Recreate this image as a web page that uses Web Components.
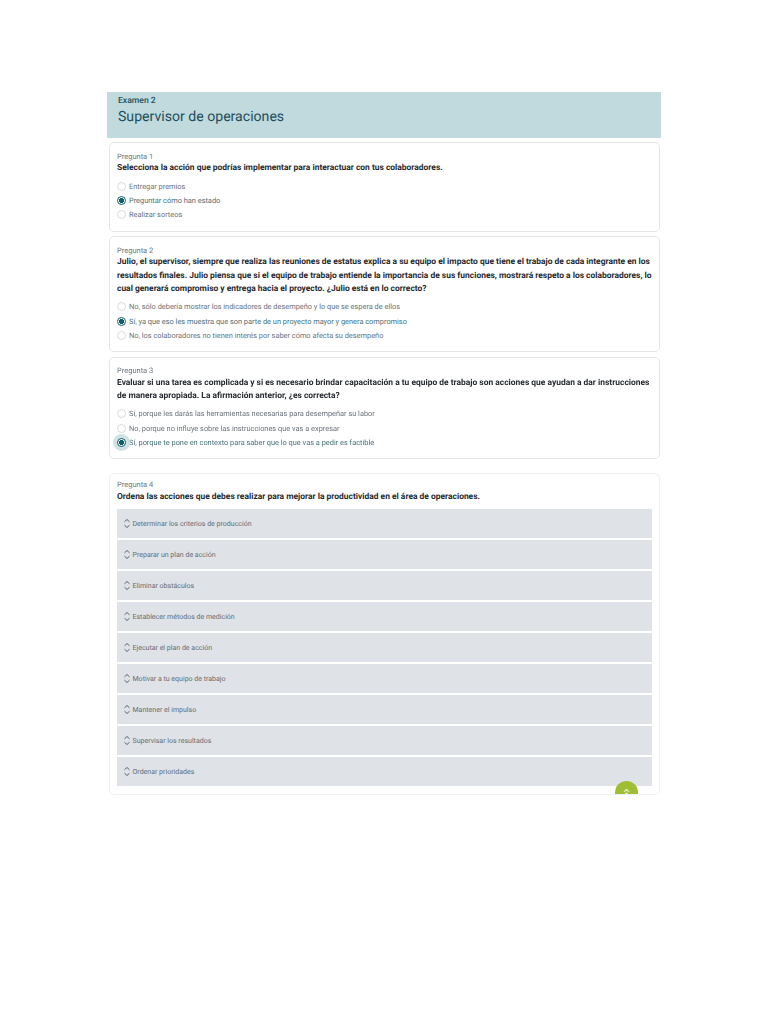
<!DOCTYPE html>
<html lang="es">
<head>
<meta charset="utf-8">
<title>Examen 2</title>
<style>
  html, body { margin: 0; background: #fff; }
  body { font-family: Roboto, "Liberation Sans", sans-serif; color: #263238; text-rendering: geometricPrecision; }
  #page { width: 554px; margin-left: 107px; padding-top: 92px; filter: blur(0.5px); }
</style>
</head>
<body>
<template id="exam-header-tpl">
  <style>
    :host { display: block; height: 46px; box-sizing: border-box; padding: 3px 11px; background: #c0dade; color: #1f4f5a; }
    .sub { font-size: 8.6px; line-height: 12px; font-weight: 500; }
    .title { font-size: 14.1px; line-height: 18px; margin-top: 1px; }
  </style>
  <div class="sub"><slot name="sub"></slot></div>
  <div class="title"><slot name="title"></slot></div>
</template>

<template id="q-card-tpl">
  <style>
    :host { display: block; position: relative; overflow: hidden; box-sizing: border-box; margin: 4px 1px 0 2px; padding: 7.5px 7px 6px; background: #fff; border: 1px solid var(--card-border, #e3e5e7); border-radius: 5px; }
    .label { font-size: 7.5px; line-height: 11px; color: #6f787f; }
    .text { margin-top: 0.7px; font-size: 8.45px; line-height: 13.4px; font-weight: 700; color: #272b30; }
    .body { margin-top: var(--body-gap, 3.3px); display: flex; flex-direction: column; }
  </style>
  <div class="label"><slot name="label"></slot></div>
  <div class="text"><slot name="text"></slot></div>
  <div class="body"><slot></slot></div>
</template>

<template id="radio-option-tpl">
  <style>
    :host { display: flex; align-items: center; gap: 3.5px; height: 14.3px; font-size: 7.4px; color: #6a737b; }
    :host([checked]) { color: #47727a; }
    .wrap { position: relative; z-index: 0; display: flex; margin-left: -0.5px; }
    .dot { position: relative; box-sizing: border-box; flex: none; width: 9px; height: 9px; border-radius: 50%; background: #fff; border: 1px solid #d6d9dc; }
    :host([checked]) .dot { border-color: #0f5f6b; background: radial-gradient(circle, #0f5f6b 0 2.3px, #fff 2.8px); }
    :host([focused]) .wrap::before { content: ""; position: absolute; inset: -4px; border-radius: 50%; background: #cfe3e6; z-index: -1; }
  </style>
  <span class="wrap"><span class="dot"></span></span>
  <span><slot></slot></span>
</template>

<template id="sort-item-tpl">
  <style>
    :host { display: flex; align-items: center; gap: 1.5px; height: 29px; margin-bottom: 2px; padding-left: 6px; background: #dfe2e6; font-size: 7.03px; color: #666e76; }
    svg { display: block; flex: none; }
  </style>
  <svg width="8" height="11" viewBox="0 0 8 11" fill="none" stroke="#59626a" stroke-width="1"><path d="M1.5 3.8 4 1.5l2.5 2.3M1.5 7.2 4 9.5l2.5-2.3"/></svg>
  <span><slot></slot></span>
</template>

<template id="scroll-fab-tpl">
  <style>
    :host { display: block; position: absolute; right: 21.5px; bottom: -10px; width: 23px; height: 23px; border-radius: 50%; background: #9fbe34; }
    svg { display: block; margin: 7px auto 0; }
  </style>
  <svg width="7" height="9" viewBox="0 0 7 9" fill="none" stroke="#e6efc4" stroke-width="1.2"><path d="M1 3.8 3.5 1.3 6 3.8M1 7.6l2.5-2.5L6 7.6"/></svg>
</template>

<div id="page">
  <exam-header>
    <span slot="sub">Examen 2</span>
    <span slot="title">Supervisor de operaciones</span>
  </exam-header>

  <q-card style="height:90px">
    <span slot="label">Pregunta 1</span>
    <span slot="text">Selecciona la acción que podrías implementar para interactuar con tus colaboradores.</span>
    <radio-option>Entregar premios</radio-option>
    <radio-option checked>Preguntar cómo han estado</radio-option>
    <radio-option>Realizar sorteos</radio-option>
  </q-card>

  <q-card style="height:116px">
    <span slot="label">Pregunta 2</span>
    <span slot="text">Julio, el supervisor, siempre que realiza las reuniones de estatus explica a su equipo el impacto que tiene el trabajo de cada integrante en los resultados finales. Julio piensa que si el equipo de trabajo entiende la importancia de sus funciones, mostrará respeto a los colaboradores, lo cual generará compromiso y entrega hacia el proyecto. ¿Julio está en lo correcto?</span>
    <radio-option>No, sólo debería mostrar los indicadores de desempeño y lo que se espera de ellos</radio-option>
    <radio-option checked>Sí, ya que eso les muestra que son parte de un proyecto mayor y genera compromiso</radio-option>
    <radio-option>No, los colaboradores no tienen interés por saber cómo afecta su desempeño</radio-option>
  </q-card>

  <q-card style="height:102px;margin-top:5px;padding-top:7px">
    <span slot="label">Pregunta 3</span>
    <span slot="text">Evaluar si una tarea es complicada y si es necesario brindar capacitación a tu equipo de trabajo son acciones que ayudan a dar instrucciones de manera apropiada. La afirmación anterior, ¿es correcta?</span>
    <radio-option>Sí, porque les darás las herramientas necesarias para desempeñar su labor</radio-option>
    <radio-option>No, porque no influye sobre las instrucciones que vas a expresar</radio-option>
    <radio-option checked focused>Sí, porque te pone en contexto para saber que lo que vas a pedir es factible</radio-option>
  </q-card>

  <q-card style="height:322px;margin-top:14px;padding-top:5px;--body-gap:4.8px;--card-border:#eff0f2">
    <span slot="label">Pregunta 4</span>
    <span slot="text">Ordena las acciones que debes realizar para mejorar la productividad en el área de operaciones.</span>
    <sort-item>Determinar los criterios de producción</sort-item>
    <sort-item>Preparar un plan de acción</sort-item>
    <sort-item>Eliminar obstáculos</sort-item>
    <sort-item>Establecer métodos de medición</sort-item>
    <sort-item>Ejecutar el plan de acción</sort-item>
    <sort-item>Motivar a tu equipo de trabajo</sort-item>
    <sort-item>Mantener el impulso</sort-item>
    <sort-item>Supervisar los resultados</sort-item>
    <sort-item>Ordenar prioridades</sort-item>
    <scroll-fab></scroll-fab>
  </q-card>
</div>

<script>
  const register = (name, tplId) => {
    customElements.define(name, class extends HTMLElement {
      constructor () {
        super()
        const root = this.attachShadow({ mode: 'open' })
        root.append(document.getElementById(tplId).content.cloneNode(true))
      }
    })
  }
  register('exam-header', 'exam-header-tpl')
  register('q-card', 'q-card-tpl')
  register('radio-option', 'radio-option-tpl')
  register('sort-item', 'sort-item-tpl')
  register('scroll-fab', 'scroll-fab-tpl')
</script>
</body>
</html>
